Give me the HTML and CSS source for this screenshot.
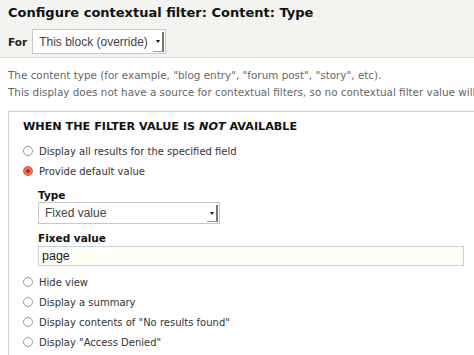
FILE: index.html
```html
<!DOCTYPE html>
<html>
<head>
<meta charset="utf-8">
<link rel="stylesheet" href="styles.css">
</head>
<body>
<div class="header">
  <h1 class="title">Configure contextual filter: Content: Type</h1>
  <div class="for-row">
    <span class="for-label">For</span>
    <div class="select select-override"><span class="select-text">This block (override)</span><span class="select-btn"><span class="arrow"></span></span></div>
  </div>
</div>
<div class="desc">
  <p>The content type (for example, "blog entry", "forum post", "story", etc).</p>
  <p>This display does not have a source for contextual filters, so no contextual filter value will be available.</p>
</div>
<div class="fieldset">
  <div class="legend">WHEN THE FILTER VALUE IS <em>NOT</em> AVAILABLE</div>
  <div class="radio-row"><span class="radio"></span><span class="radio-label">Display all results for the specified field</span></div>
  <div class="radio-row"><span class="radio checked"></span><span class="radio-label">Provide default value</span></div>
  <div class="sub">
    <div class="field-label">Type</div>
    <div class="select select-type"><span class="select-text">Fixed value</span><span class="select-btn"><span class="arrow"></span></span></div>
    <div class="field-label field-label-2">Fixed value</div>
    <div class="textinput">page</div>
  </div>
  <div class="radio-row"><span class="radio"></span><span class="radio-label">Hide view</span></div>
  <div class="radio-row"><span class="radio"></span><span class="radio-label">Display a summary</span></div>
  <div class="radio-row"><span class="radio"></span><span class="radio-label">Display contents of "No results found"</span></div>
  <div class="radio-row"><span class="radio"></span><span class="radio-label">Display "Access Denied"</span></div>
</div>
</body>
</html>
```
FILE: styles.css
```css
html, body {
  margin: 0;
  padding: 0;
  background: #ffffff;
  overflow: hidden;
  white-space: nowrap;
  font-family: "DejaVu Sans", sans-serif;
  color: #333;
}
.header {
  height: 57px;
  background: #f3f3ef;
  border-bottom: 1px solid #e2e2dd;
  padding: 0 8px;
}
.title {
  margin: 0;
  padding-top: 5px;
  font-size: 13px;
  line-height: 16px;
  font-weight: bold;
  color: #111;
}
.for-row {
  display: flex;
  align-items: center;
  gap: 5px;
  margin-top: 8px;
}
.for-label {
  font-size: 10.5px;
  font-weight: bold;
  color: #222;
}
.select {
  display: flex;
  align-items: center;
  box-sizing: border-box;
  background: #fff;
  border: 1px solid #c8c8c8;
  font-family: "Liberation Sans", Arial, sans-serif;
  font-size: 12px;
  color: #444;
}
.select-override {
  width: 134px;
  height: 25px;
  padding-left: 6px;
}
.select-type {
  width: 182px;
  height: 22px;
  padding-left: 6px;
}
.select-text {
  flex: 1;
}
.select-btn {
  align-self: stretch;
  width: 9px;
  margin: 2px 1px 1px 0;
  border-right: 2px solid #777;
  border-bottom: 1px solid #999;
  display: flex;
  align-items: center;
  justify-content: center;
}
.arrow {
  width: 0;
  height: 0;
  border-left: 2px solid transparent;
  border-right: 2px solid transparent;
  border-top: 3px solid #111;
}
.desc {
  padding: 0 8px;
  margin-top: 9px;
  font-size: 10.4px;
  line-height: 17px;
  color: #666;
}
.desc p {
  margin: 0;
}
.fieldset {
  margin: 10px 0 0 8px;
  border: 1px solid #cfcfcf;
  border-right: none;
  padding: 7px 0 20px 14px;
  height: 300px;
}
.legend {
  font-size: 11.2px;
  font-weight: bold;
  color: #111;
  line-height: 16px;
  margin-bottom: 6px;
}
.radio-row {
  display: flex;
  align-items: center;
  height: 20px;
}
.radio {
  box-sizing: border-box;
  width: 10px;
  height: 10px;
  border-radius: 50%;
  border: 1px solid #9a9a9a;
  background: #fff;
  margin-right: 6px;
}
.radio.checked {
  border-color: #d2583a;
  background: radial-gradient(circle, #b8301e 0 1.6px, #ee7a58 2.2px, #e8643f 100%);
}
.radio-label {
  font-size: 10px;
  color: #333;
}
.sub {
  padding: 7px 0 6px 15px;
}
.field-label {
  font-size: 10.5px;
  font-weight: bold;
  color: #111;
  line-height: 14px;
}
.field-label-2 {
  margin-top: 7px;
}
.textinput {
  box-sizing: border-box;
  width: 426px;
  height: 20px;
  margin-top: 1px;
  border: 1px solid #c5d3e2;
  background: #fffff6;
  font-family: "Liberation Sans", Arial, sans-serif;
  font-size: 12.5px;
  color: #222;
  padding-left: 3px;
  line-height: 18px;
}
```
